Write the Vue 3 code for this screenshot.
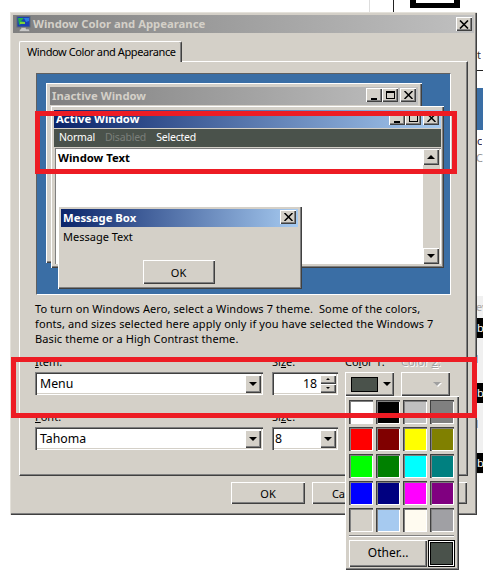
<script setup>
const palette = ['#ffffff','#000000','#c0c0c0','#808080','#ff0000','#800000','#ffff00','#808000','#00ff00','#008000','#00ffff','#008080','#0000ff','#000080','#ff00ff','#800080','#d4d0c8','#a6caf0','#fffbf0','#a0a0a4']
</script>

<template>
  <div class="screen">
    <div class="bg-line l1"></div>
    <div class="bg-line l2"></div>
    <div class="bg-thumb"></div>
    <div class="bg-hr"></div>
    <div class="bg-blue"></div>
    <div class="bg-grey g1"></div>
    <span class="bg-t">t</span>
    <span class="bg-c1">c</span>
    <span class="bg-c2">Co</span>
    <span class="bg-ev">ev</span>
    <span class="bg-b b1">b</span>
    <span class="bg-b b2">b</span>
    <span class="bg-b b3">b</span>
    <i class="tick t1"></i>
    <i class="tick t2"></i>

    <section class="dialog">
      <header class="titlebar inactive-grad">
        <svg class="appicon" width="16" height="17" viewBox="0 0 16 17">
          <rect x="1" y="0.500" width="13" height="10.500" fill="#1c3fb5" stroke="#5a6a7a"/>
          <path d="M2 2h6l-3 3 4 1-6 3z" fill="#22b04c"/>
          <path d="M8 2h5v3l-3 1z" fill="#2b7de0"/>
          <path d="M4 6h5v2H4z" fill="#7fd13b"/>
          <path d="M5 11.500h5v1.500h3l1 2.500H3l1-2.500h1z" fill="#c8c8c8" stroke="#777" stroke-width=".5"/>
        </svg>
        <span class="title-text">Window Color and Appearance</span>
        <button class="cap cap-main"><svg width="10" height="9" viewBox="0 0 10 9"><path d="M1 0.500l8 8M9 0.500l-8 8" stroke="#000" stroke-width="1.600"/></svg></button>
      </header>

      <div class="tab">Window Color and Appearance</div>
      <div class="panel">
        <div class="preview">
          <div class="win win-inactive">
            <div class="wbar inactive-grad2">
              <span>Inactive Window</span>
              <span class="caps">
                <i class="cap"><b class="glyph-min"></b></i><i class="cap"><b class="glyph-max"></b></i><i class="cap gap"><svg width="9" height="8" viewBox="0 0 9 8"><path d="M.5 0l8 8M8.500 0l-8 8" stroke="#000" stroke-width="1.500"/></svg></i>
              </span>
            </div>
          </div>

          <div class="win win-active">
            <div class="wbar active-grad">
              <span>Active Window</span>
              <span class="caps">
                <i class="cap"><b class="glyph-min"></b></i><i class="cap"><b class="glyph-max"></b></i><i class="cap gap"><svg width="9" height="8" viewBox="0 0 9 8"><path d="M.5 0l8 8M8.500 0l-8 8" stroke="#000" stroke-width="1.500"/></svg></i>
              </span>
            </div>
            <div class="menubar"><span>Normal</span><span class="dis">Disabled</span><span>Selected</span></div>
            <div class="client">
              <div class="wintext">Window Text</div>
              <div class="vscroll">
                <i class="sbtn"><b class="tri up"></b></i>
                <i class="sbtn"><b class="tri"></b></i>
              </div>
            </div>
          </div>

          <div class="win msg">
            <div class="wbar active-grad">
              <span>Message Box</span>
              <i class="cap"><svg width="9" height="8" viewBox="0 0 9 8"><path d="M.5 0l8 8M8.500 0l-8 8" stroke="#000" stroke-width="1.500"/></svg></i>
            </div>
            <div class="msg-text">Message Text</div>
            <div class="msg-foot"><button class="btn msg-ok">OK</button></div>
          </div>
        </div>

        <p class="note">To turn on Windows Aero, select a Windows 7 theme.&nbsp; Some of the colors,<br>fonts, and sizes selected here apply only if you have selected the Windows 7<br>Basic theme or a High Contrast theme.</p>

        <div class="form">
          <label class="lab c1"><u>I</u>tem:</label>
          <label class="lab c2">Si<u>z</u>e:</label>
          <label class="lab c3">Co<u>l</u>or 1:</label>
          <label class="lab c4 off">Color <u>2</u>:</label>

          <div class="field combo c1 wide"><span class="val">Menu</span><i class="dd"><b class="tri"></b></i></div>
          <div class="field spin c2"><span class="val right">18</span><span class="spinbtns"><i class="sp"><b class="tri mini up"></b></i><i class="sp"><b class="tri mini"></b></i></span></div>
          <button class="btn colorbtn c3"><span class="chip"></span><b class="tri"></b></button>
          <button class="btn colorbtn c4"><b class="tri grey"></b></button>

          <label class="lab c1"><u>F</u>ont:</label>
          <label class="lab c2">Si<u>z</u>e:</label>
          <span class="c3"></span>
          <span class="c4"></span>

          <div class="field combo c1 wide"><span class="val">Tahoma</span><i class="dd"><b class="tri"></b></i></div>
          <div class="field combo c2"><span class="val tight">8</span><i class="dd"><b class="tri"></b></i></div>
        </div>
      </div>
      <div class="footer">
        <button class="btn fbtn">OK</button>
        <button class="btn fbtn">Cancel</button>
        <button class="btn fbtn">Apply</button>
      </div>
    </section>

    <div class="popup">
      <div class="swatches">
        <div v-for="c in palette" :key="c" class="cell"><span class="swatch" :style="{ background: c }"></span></div>
      </div>
      <div class="sep"></div>
      <div class="other-row">
        <button class="btn other">Other...</button>
        <div class="current"><span></span></div>
      </div>
    </div>

    <div class="mark m1"></div>
    <div class="mark m2"></div>
  </div>
</template>

<style>
html, body { margin: 0; background: #fff; }
</style>

<style scoped>
.screen { position: relative; width: 483px; height: 571px; overflow: hidden; background: #fff; font-family: "Noto Sans", "DejaVu Sans", sans-serif; font-size: 11px; color: #000; }
button { font: inherit; color: #000; padding: 0; border: 0; }
i, b { font-style: normal; }

.bg-line { position: absolute; top: 0; height: 12px; width: 1px; }
.l1 { left: 369px; background: #ddd; }
.l2 { left: 393px; background: #222; }
.bg-thumb { position: absolute; left: 410px; top: 0; width: 50px; height: 8px; box-sizing: border-box; background: #fff; border: solid #000; border-width: 0 6px 5px; }
.bg-hr { position: absolute; left: 476px; top: 70px; width: 7px; height: 1px; background: #222; }
.bg-blue { position: absolute; left: 476px; top: 88px; width: 7px; height: 42px; background: #3a6ea5; }
.bg-grey { position: absolute; left: 476px; width: 7px; top: 296px; height: 178px; background: #f0f0f0; }
.bg-t, .bg-c1, .bg-c2, .bg-ev, .bg-b { position: absolute; left: 477px; font-size: 11px; line-height: 13px; overflow: hidden; }
.bg-t { top: 48px; color: #333; }
.bg-c1 { top: 134px; color: #224; }
.bg-c2 { top: 151px; color: #999; left: 476px; width: 7px; }
.bg-ev { top: 300px; color: #aaa; left: 476px; width: 7px; }
.bg-b { left: 476px; width: 6px; height: 20px; background: #000; color: #fff; line-height: 20px; padding-left: 1px; }
.b1 { top: 318px; }
.b2 { top: 383px; }
.b3 { top: 453px; }
.tick { position: absolute; left: 477px; width: 1px; height: 8px; background: #9bbbe0; }
.t1 { top: 355px; }
.t2 { top: 420px; }

.dialog { position: absolute; left: 10px; top: 12px; width: 467px; height: 503px; box-sizing: border-box; padding: 3px; background: #d4d0c8; display: flex; flex-direction: column; box-shadow: inset 1px 1px #e4e1da, inset -1px -1px #404040, inset -2px -2px #808080; }
.titlebar { height: 18px; flex: none; display: flex; align-items: center; padding: 0 2px 0 3px; }
.inactive-grad { background: linear-gradient(90deg, #808080, #c0c0c0); }
.appicon { flex: none; margin-right: 1px; }
.title-text { flex: 1; font-weight: 700; color: #d4d0c8; font-size: 11.300px; padding-bottom: 2px; }
.cap { display: inline-flex; align-items: center; justify-content: center; width: 16px; height: 14px; background: #d4d0c8; box-shadow: inset 1px 1px #fff, inset -1px -1px #404040, inset -2px -2px #808080; }
.cap-main { flex: none; }
.tab { margin: 8px 0 0 6px; width: 163px; height: 21px; box-sizing: border-box; line-height: 20px; padding-left: 7px; white-space: nowrap; letter-spacing: -0.400px; background: #d4d0c8; border-top: 1px solid #fff; border-left: 1px solid #fff; border-right: 1px solid #404040; border-radius: 2px 2px 0 0; position: relative; z-index: 1; box-shadow: inset -1px 0 #808080; }
.panel { margin-left: 6px; width: 449px; height: 415px; box-sizing: border-box; flex: none; padding: 11px 0 0 16px; border-top: 1px solid #fff; border-left: 1px solid #fff; border-right: 1px solid #404040; border-bottom: 1px solid #404040; box-shadow: inset -1px -1px #808080; margin-top: -1px; }

.preview { position: relative; width: 415px; height: 222px; box-sizing: border-box; background: #3a6ea5; border-top: 1px solid #606060; border-left: 1px solid #606060; border-right: 1px solid #fff; border-bottom: 1px solid #fff; }
.win { position: absolute; background: #d4d0c8; box-sizing: border-box; box-shadow: inset 1px 1px #fff, inset -1px -1px #404040, inset -2px -2px #808080; padding: 3px 4px 4px 3px; }
.win-inactive { left: 9px; top: 9px; width: 376px; height: 180px; padding: 4px; }
.win-active { left: 14px; top: 32px; width: 393px; height: 162px; padding: 4px 3px; }
.msg { left: 21px; top: 132px; width: 244px; height: 83px; }
.wbar { height: 18px; box-sizing: border-box; display: flex; justify-content: space-between; align-items: center; padding: 0 2px 2px; font-weight: 700; font-size: 11.300px; color: #fff; }
.inactive-grad2 { background: linear-gradient(90deg, #808080, #c0c0c0); color: #d4d0c8; }
.active-grad { background: linear-gradient(90deg, #0a246a, #a6caf0); }
.caps { display: flex; }
.caps .gap { margin-left: 2px; }
.glyph-min { width: 6px; height: 2px; background: #000; margin-top: 7px; margin-right: 1px; }
.glyph-max { width: 9px; height: 8px; border: 1px solid #000; border-top-width: 2px; box-sizing: border-box; }
.menubar { height: 18px; box-sizing: border-box; margin-top: 1px; background: #4a524b; color: #fff; display: flex; gap: 10px; align-items: center; padding: 0 0 2px 5px; font-size: 10.500px; letter-spacing: -0.200px; }
.menubar .dis { color: #7b7f7a; }
.client { height: 115px; margin: 1px 0 0 1px; background: #fff; display: flex; justify-content: space-between; border-top: 1px solid #808080; border-left: 1px solid #808080; padding-right: 1px; }
.wintext { font-weight: 700; font-size: 11.300px; padding: 1px 0 0 2px; }
.vscroll { width: 17px; background: #d4d0c8; display: flex; flex-direction: column; justify-content: space-between; }
.sbtn { width: 16px; height: 16px; display: flex; align-items: center; justify-content: center; background: #d4d0c8; box-shadow: inset 1px 1px #fff, inset -1px -1px #404040, inset -2px -2px #808080; }
.tri { display: block; width: 0; height: 0; border-left: 4px solid transparent; border-right: 4px solid transparent; border-top: 4px solid #000; }
.tri.up { border-top: 0; border-bottom: 4px solid #000; }
.tri.mini { border-left-width: 2px; border-right-width: 2px; border-top-width: 2px; }
.tri.mini.up { border-top-width: 0; border-bottom-width: 2px; }
.tri.grey { border-top-color: #a0a0a0; filter: drop-shadow(1px 1px 0 #fff); }
.msg-text { padding-left: 2px; height: 27px; box-sizing: border-box; line-height: 20px; }
.msg-foot { display: flex; justify-content: center; margin: 6px 0 0 -2px; }
.btn { background: #d4d0c8; box-shadow: inset 1px 1px #fff, inset -1px -1px #404040, inset -2px -2px #808080; }
.msg-ok { width: 72px; height: 24px; }

.note { margin: 6px 0 0 -1px; line-height: 15px; white-space: nowrap; letter-spacing: 0.100px; }
.form { display: grid; grid-template-columns: 230px 66px 49px 49px; column-gap: 7px; margin: 9px 0 0 -1px; grid-template-rows: 17px 38px 17px 23px; }
.c1 { grid-column: 1; } .c2 { grid-column: 2; } .c3 { grid-column: 3; } .c4 { grid-column: 4; }
.lab { line-height: 14px; white-space: nowrap; }
.off { color: #a0a0a0; text-shadow: 1px 1px 0 #fff; }
.field { background: #fff; display: flex; justify-content: space-between; align-items: center; height: 23px; box-sizing: border-box; box-shadow: inset 1px 1px #808080, inset 2px 2px #404040, inset -1px -1px #fff, inset -2px -2px #d4d0c8; padding: 2px; }
.wide { width: 228px; }
.val { padding-left: 3px; font-size: 12.300px; flex: 1; }
.val.tight { padding-left: 1px; }
.val.right { text-align: right; padding-right: 3px; }
.dd { width: 16px; height: 18px; display: flex; align-items: center; justify-content: center; background: #d4d0c8; box-shadow: inset 1px 1px #fff, inset -1px -1px #404040, inset -2px -2px #808080; flex: none; }
.spinbtns { display: flex; flex-direction: column; width: 16px; flex: none; }
.sp { height: 9px; display: flex; align-items: center; justify-content: center; background: #d4d0c8; box-shadow: inset 1px 1px #fff, inset -1px -1px #404040, inset -2px -2px #808080; }
.colorbtn { height: 24px; display: flex; align-items: center; justify-content: flex-start; gap: 5px; padding-left: 6px; box-sizing: border-box; }
.colorbtn.c4 { justify-content: flex-end; padding-right: 9px; }
.chip { width: 27px; height: 15px; box-sizing: border-box; background: #4a524b; border: 1px solid #000; }

.footer { display: flex; gap: 7px; justify-content: flex-end; margin: 6px 7px 0 0; }
.fbtn { width: 74px; height: 22px; }

.popup { position: absolute; left: 345px; top: 396px; width: 114px; height: 174px; box-sizing: border-box; background: #d4d0c8; padding: 4px; box-shadow: inset 1px 1px #fff, inset -1px -1px #404040, inset -2px -2px #808080; }
.swatches { display: grid; grid-template-columns: repeat(4, 24px); column-gap: 3px; grid-auto-rows: 24px; row-gap: 3px; }
.cell { box-shadow: inset 1px 1px #404040, inset 2px 2px #808080, inset -1px -1px #fff; padding: 2px 1px 1px 2px; box-sizing: border-box; }
.swatch { display: block; width: 100%; height: 100%; }
.sep { height: 1px; background: #808080; border-bottom: 1px solid #fff; margin: 3px 1px 3px 0; }
.other-row { display: flex; gap: 1px; }
.other { width: 79px; height: 27px; font-size: 12px; padding-bottom: 2px; }
.current { width: 27px; height: 27px; box-sizing: border-box; background: #000; padding: 1px; }
.current span { display: block; height: 100%; box-sizing: border-box; background: #4a524b; border: 1px solid #fff; box-shadow: inset 0 0 0 1px #000; }

.mark { position: absolute; box-sizing: border-box; border: 5px solid #ed1c24; }
.m1 { left: 35px; top: 111px; width: 422px; height: 63px; }
.m2 { left: 11px; top: 357px; width: 466px; height: 61px; }
</style>
